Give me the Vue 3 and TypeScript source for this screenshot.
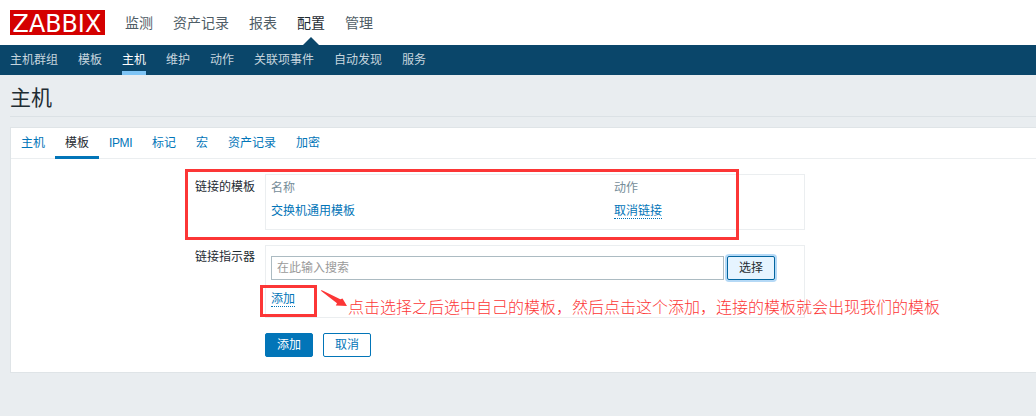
<script setup lang="ts">
interface Item {
  label: string
  active?: boolean
  latin?: boolean
}

const mainMenu: Item[] = [
  { label: '监测' },
  { label: '资产记录' },
  { label: '报表' },
  { label: '配置', active: true },
  { label: '管理' },
]

const subMenu: Item[] = [
  { label: '主机群组' },
  { label: '模板' },
  { label: '主机', active: true },
  { label: '维护' },
  { label: '动作' },
  { label: '关联项事件' },
  { label: '自动发现' },
  { label: '服务' },
]

const tabs: Item[] = [
  { label: '主机' },
  { label: '模板', active: true },
  { label: 'IPMI', latin: true },
  { label: '标记' },
  { label: '宏' },
  { label: '资产记录' },
  { label: '加密' },
]
</script>

<template>
  <div class="page">
    <header class="top">
      <svg class="logo" width="95" height="25" viewBox="0 0 95 25">
        <rect width="95" height="25" fill="#d40000" />
        <text x="2.6" y="21.6" textLength="88.6" lengthAdjust="spacingAndGlyphs">ZABBIX</text>
      </svg>
      <nav class="main-menu">
        <a v-for="item in mainMenu" :key="item.label" :class="{ active: item.active }">{{ item.label }}</a>
      </nav>
    </header>
    <nav class="sub-menu">
      <a v-for="item in subMenu" :key="item.label" :class="{ active: item.active }">{{ item.label }}</a>
    </nav>
    <h1 class="title">主机</h1>
    <main class="panel">
      <nav class="tabs">
        <a v-for="tab in tabs" :key="tab.label" :class="{ active: tab.active, latin: tab.latin }">{{ tab.label }}</a>
      </nav>
      <div class="row linked">
        <label>链接的模板</label>
        <div class="box">
          <div class="cols head"><span>名称</span><span>动作</span></div>
          <div class="cols"><a>交换机通用模板</a><span><a class="dotted">取消链接</a></span></div>
        </div>
      </div>
      <div class="row indicator">
        <label>链接指示器</label>
        <div class="box">
          <div class="search">
            <input type="text" placeholder="在此输入搜索" />
            <button class="select" type="button">选择</button>
          </div>
          <a class="dotted">添加</a>
        </div>
      </div>
      <div class="actions">
        <button class="primary" type="button">添加</button>
        <button type="button">取消</button>
      </div>
    </main>
    <div class="mark mark-linked"></div>
    <div class="mark mark-add"></div>
    <svg class="arrow" width="28" height="18" viewBox="0 0 28 18">
      <path d="M.8 .2 Q2 0 4 1.2L20.3 9.2 22.5 8.6 27 16 15.8 15.4 17 13.2 1.2 1Z" fill="#fc3636" />
    </svg>
    <p class="note">点击选择之后选中自己的模板，然后点击这个添加，连接的模板就会出现我们的模板</p>
  </div>
</template>

<style>
body {
  margin: 0;
  overflow: hidden;
}
</style>

<style scoped>
.page,
.page * {
  box-sizing: border-box;
}

.page {
  position: relative;
  width: 1036px;
  height: 416px;
  overflow: hidden;
  background: #e9edf0;
  color: #1f2c33;
  font: 12px/18px "Liberation Sans", "Noto Sans CJK SC", sans-serif;
}

a {
  color: #0275b8;
  white-space: nowrap;
}

.top {
  display: flex;
  height: 45px;
  padding: 10px 10px 0;
  background: #fff;
}

.logo {
  flex: none;
  overflow: visible;
}

.logo text {
  font: 24.5px "DejaVu Sans", sans-serif;
  fill: #fff;
}

.main-menu {
  display: flex;
  gap: 20px;
  margin-left: 20px;
}

.main-menu a {
  position: relative;
  height: 35px;
  color: #4f5d66;
  font-size: 14px;
  line-height: 26px;
}

.main-menu a.active {
  color: #1f2c33;
}

.main-menu a.active::after {
  content: "";
  position: absolute;
  bottom: 0;
  left: 6px;
  border: 8px solid transparent;
  border-top: 0;
  border-bottom-color: #0a466a;
}

.sub-menu {
  display: flex;
  gap: 20px;
  height: 30px;
  padding-left: 10px;
  background: #0a466a;
}

.sub-menu a {
  height: 30px;
  color: #c6d5de;
  line-height: 31px;
}

.sub-menu a.active {
  border-bottom: 4px solid #7ec4f5;
  color: #fff;
}

.title {
  height: 42px;
  margin: 0 0 10px 10px;
  border-bottom: 1px solid #dbe1e5;
  font-size: 21px;
  font-weight: 400;
  line-height: 45px;
}

.panel {
  height: 246px;
  margin-left: 10px;
  border: 1px solid #dfe4e7;
  border-right: 0;
  background: #fff;
}

.tabs {
  display: flex;
  height: 31px;
  border-bottom: 1px solid #ebeef0;
}

.tabs a {
  height: 31px;
  padding: 0 10px;
  line-height: 30px;
}

.tabs a.latin {
  width: 43px;
  letter-spacing: -0.4px;
}

.tabs a.active {
  border-bottom: 3px solid #0275b8;
  color: #1f2c33;
}

.row {
  display: flex;
  gap: 10px;
  margin-top: 15px;
}

.row label {
  width: 244px;
  padding-top: 3px;
  text-align: right;
}

.linked label {
  padding-top: 4px;
}

.box {
  width: 540px;
  padding: 0 5px;
  border: 1px solid #ebeef0;
}

.linked .box {
  height: 56px;
  padding-top: 2px;
}

.cols {
  display: grid;
  grid-template-columns: 343px 1fr;
  height: 23px;
  line-height: 23px;
}

.head {
  color: #768d99;
}

.dotted {
  display: inline-block;
  height: 16px;
  border-bottom: 1px dotted #0275b8;
  line-height: 16px;
}

.indicator .box {
  height: 73px;
  padding-top: 10px;
}

.search {
  display: flex;
  gap: 3px;
  height: 24px;
  margin-bottom: 10px;
}

.search input {
  width: 453px;
  height: 24px;
  padding: 0 5px;
  border: 1px solid #acbbc2;
  outline: none;
  color: #1f2c33;
  font: inherit;
}

.search input::placeholder {
  color: #9a9a9a;
  opacity: 1;
}

button {
  width: 48px;
  height: 24px;
  padding: 0;
  border: 1px solid #0275b8;
  border-radius: 2px;
  background: #fff;
  color: #0275b8;
  font: inherit;
  line-height: 22px;
}

.select {
  border-color: #02659f;
  background: #e6f4ff;
  box-shadow: 0 0 0 2px #b5d9f6;
  color: #1f2c33;
}

.actions {
  display: flex;
  gap: 10px;
  margin: 15px 0 0 254px;
}

.primary {
  background: #0275b8;
  color: #fff;
}

.mark {
  position: absolute;
  border: 3px solid #fc3636;
}

.mark-linked {
  top: 169px;
  left: 185px;
  width: 554px;
  height: 71px;
}

.mark-add {
  top: 285px;
  left: 260px;
  width: 57px;
  height: 32px;
}

.arrow {
  position: absolute;
  top: 290px;
  left: 320px;
}

.note {
  position: absolute;
  top: 297px;
  left: 348px;
  margin: 0;
  color: #fc3636;
  font-size: 16px;
  font-weight: 300;
  line-height: 22px;
  white-space: nowrap;
}
</style>
